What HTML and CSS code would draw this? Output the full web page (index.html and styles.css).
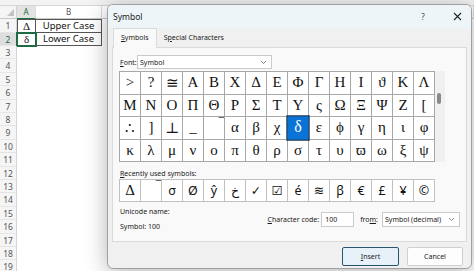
FILE: index.html
```html
<!DOCTYPE html>
<html lang="en">
<head>
  <meta charset="UTF-8" />
  <meta name="viewport" content="width=device-width, initial-scale=1.0" />
  <title>Symbol</title>
  <link rel="stylesheet" href="styles.css">
</head>
<body>
  <div class="sheet">
    <div class="formula-edge"></div>
    <div class="sheet-grid" id="sheetGrid">
      <div class="corner"><span class="corner-tri"></span></div>
      <div class="col-head active">A</div>
      <div class="col-head">B</div>
      <div class="col-head"></div>

      <div class="row-head">1</div>
      <div class="cell sym boxed top left">Δ</div>
      <div class="cell boxed top">Upper Case</div>
      <div class="cell"></div>

      <div class="row-head active">2</div>
      <div class="cell sym boxed left current">δ</div>
      <div class="cell boxed">Lower Case</div>
      <div class="cell"></div>
    </div>
  </div>

  <div class="dialog">
    <div class="titlebar">
      <span class="title">Symbol</span>
      <span class="help">?</span>
      <span class="close">
        <svg width="9" height="9" viewBox="0 0 9 9"><path d="M1 1 L8 8 M8 1 L1 8" stroke="#222" stroke-width="1.1" fill="none"/></svg>
      </span>
    </div>

    <div class="dialog-body">
      <div class="tabs">
        <div class="tab active"><u>S</u>ymbols</div>
        <div class="tab">S<u>p</u>ecial Characters</div>
      </div>

      <div class="panel">
        <div class="font-row">
          <span class="font-label"><u>F</u>ont:</span>
          <div class="select font-select">
            <span>Symbol</span>
            <svg width="7" height="5" viewBox="0 0 7 5"><path d="M1 1 L3.5 3.5 L6 1" stroke="#777" stroke-width="0.9" fill="none"/></svg>
          </div>
        </div>

        <div class="symbols-wrap">
          <div class="symbol-grid" id="symbolGrid"></div>
          <div class="scrollbar"><div class="thumb"></div></div>
        </div>

        <div class="recent-label"><u>R</u>ecently used symbols:</div>
        <div class="recent-grid" id="recentGrid"></div>

        <div class="info-row">
          <div class="unicode-info">
            <span>Unicode name:</span>
            <span>Symbol: 100</span>
          </div>
          <div class="code-row">
            <span><u>C</u>haracter code:</span>
            <div class="code-input">100</div>
            <span>fro<u>m</u>:</span>
            <div class="select from-select">
              <span>Symbol (decimal)</span>
              <svg width="7" height="5" viewBox="0 0 7 5"><path d="M1 1 L3.5 3.5 L6 1" stroke="#777" stroke-width="0.9" fill="none"/></svg>
            </div>
          </div>
        </div>
      </div>

      <div class="buttons">
        <button class="btn default"><span><u>I</u>nsert</span></button>
        <button class="btn">Cancel</button>
      </div>
    </div>
  </div>

  <script>
    const symbols = [
      ">", "?", "≅", "Α", "Β", "Χ", "Δ", "Ε", "Φ", "Γ", "Η", "Ι", "ϑ", "Κ", "Λ",
      "Μ", "Ν", "Ο", "Π", "Θ", "Ρ", "Σ", "Τ", "Υ", "ς", "Ω", "Ξ", "Ψ", "Ζ", "[",
      "∴", "]", "⊥", "_", "‾", "α", "β", "χ", "δ", "ε", "ϕ", "γ", "η", "ι", "φ",
      "κ", "λ", "μ", "ν", "ο", "π", "θ", "ρ", "σ", "τ", "υ", "ϖ", "ω", "ξ", "ψ"
    ];
    const recent = ["Δ", "‾", "σ", "Ø", "ŷ", "خ", "✓", "☑", "é", "≋", "β", "€", "£", "¥", "©"];

    const symbolGrid = document.getElementById("symbolGrid");
    symbols.forEach((ch, i) => {
      const cell = document.createElement("div");
      cell.className = "sym-cell";
      if (ch === "‾") cell.classList.add("top-right");
      if (i === 38) cell.classList.add("selected");
      cell.textContent = ch;
      symbolGrid.appendChild(cell);
    });

    const recentGrid = document.getElementById("recentGrid");
    recent.forEach((ch, i) => {
      const cell = document.createElement("div");
      cell.className = "recent-cell";
      if (i === 0) cell.classList.add("serif");
      if (ch === "‾") cell.classList.add("top-right");
      cell.textContent = ch;
      recentGrid.appendChild(cell);
    });

    const sheetGrid = document.getElementById("sheetGrid");
    for (let r = 3; r <= 19; r++) {
      const head = document.createElement("div");
      head.className = "row-head";
      head.textContent = r;
      sheetGrid.appendChild(head);
      for (let c = 0; c < 3; c++) {
        const cell = document.createElement("div");
        cell.className = "cell";
        sheetGrid.appendChild(cell);
      }
    }
  </script>
</body>
</html>
```

FILE: styles.css
```css
* {
  box-sizing: border-box;
  margin: 0;
  padding: 0;
}
body {
  width: 474px;
  height: 271px;
  overflow: hidden;
  position: relative;
  background: #ffffff;
  font-family: "Noto Sans", "Open Sans", "DejaVu Sans", sans-serif;
}

/* spreadsheet behind the dialog */
.sheet {
  height: 271px;
  overflow: hidden;
}
.formula-edge {
  height: 6px;
  background: #f3f3f3;
  border-bottom: 1px solid #d6d6d6;
}
.sheet-grid {
  display: grid;
  grid-template-columns: 17px 19px 66px 1fr;
  grid-template-rows: 13.3px;
  grid-auto-rows: 13.4px;
}
.corner {
  background: #f5f5f5;
  border-right: 1px solid #d4d4d4;
  border-bottom: 1px solid #c8c8c8;
  display: flex;
  justify-content: flex-end;
  align-items: flex-end;
  padding: 0 2px 2px 0;
}
.corner-tri {
  width: 0;
  height: 0;
  border-left: 7px solid transparent;
  border-bottom: 7px solid #c3c3c3;
}
.col-head {
  font-size: 8px;
  color: #555;
  text-align: center;
  line-height: 12px;
  background: #ffffff;
  border-right: 1px solid #dcdcdc;
  border-bottom: 1px solid #c8c8c8;
}
.col-head.active {
  background: #e3e3e3;
  color: #1b6a40;
  border-bottom: 1px solid #1e6e44;
}
.row-head {
  font-size: 8.5px;
  color: #555;
  text-align: center;
  line-height: 13px;
  background: #f5f5f5;
  border-right: 1px solid #d4d4d4;
  border-bottom: 1px solid #e6e6e6;
}
.row-head.active {
  background: #dedede;
  color: #1b6a40;
}
.cell {
  font-size: 9.5px;
  line-height: 12px;
  text-align: center;
  color: #111;
}
.cell.sym {
  font-family: "Liberation Serif", serif;
  font-size: 11px;
}
.cell.boxed {
  border-right: 1px solid #555;
  border-bottom: 1px solid #555;
}
.cell.top {
  border-top: 1px solid #555;
}
.cell.left {
  border-left: 1px solid #555;
}
.cell.current {
  outline: 2px solid #1d6b44;
  outline-offset: -1px;
}

/* Symbol dialog window */
.dialog {
  position: absolute;
  left: 107px;
  top: 4px;
  width: 365px;
  height: 265px;
  background: #f0f0f0;
  border: 1px solid #a0a0a0;
  border-radius: 6px;
  box-shadow: 0 3px 22px rgba(0, 0, 0, 0.3);
  display: flex;
  flex-direction: column;
  overflow: hidden;
  font-size: 7px;
  color: #1a1a1a;
}
.titlebar {
  height: 23px;
  background: #eef5f9;
  display: flex;
  align-items: center;
  padding-left: 5px;
  font-size: 8.5px;
  color: #222;
}
.title {
  flex: 1;
}
.help {
  width: 20px;
  text-align: center;
  font-size: 8px;
  color: #444;
  margin-right: 10px;
}
.close {
  width: 28px;
  display: flex;
  justify-content: center;
}
.dialog-body {
  flex: 1;
  padding: 0 4px;
  display: flex;
  flex-direction: column;
}
.tabs {
  display: flex;
  height: 19px;
  padding-left: 1px;
}
.tab {
  padding: 0 7px;
  line-height: 19px;
  font-size: 7px;
}
.tab.active {
  background: #f9f9f9;
  border: 1px solid #dadada;
  border-bottom: none;
  line-height: 18px;
  margin-bottom: -1px;
  position: relative;
  z-index: 1;
}
.panel {
  height: 195px;
  background: #f9f9f9;
  border: 1px solid #dadada;
  padding: 7px 6px 0 6px;
}
.font-row {
  display: flex;
  align-items: center;
  height: 14px;
}
.font-label {
  width: 18px;
  padding-left: 1px;
}
.select {
  height: 14px;
  background: #ffffff;
  border: 1px solid #cacaca;
  display: flex;
  align-items: center;
  justify-content: space-between;
  padding: 0 4px 0 2px;
}
.font-select {
  width: 135px;
}
.symbols-wrap {
  display: flex;
  margin-top: 2px;
}
.symbol-grid {
  display: grid;
  grid-template-columns: repeat(15, 20px);
  grid-template-rows: repeat(4, 21.6px);
  gap: 1px;
  background: #a8a8a8;
  border: 1px solid #a8a8a8;
}
.sym-cell {
  background: #ffffff;
  display: flex;
  justify-content: center;
  align-items: center;
  font-family: "Liberation Serif", "DejaVu Serif", serif;
  font-size: 15px;
  color: #111;
  overflow: hidden;
}
.sym-cell.top-right {
  justify-content: flex-end;
  align-items: flex-start;
  line-height: 15px;
}
.sym-cell.selected {
  background: #0a74d6;
  color: #ffffff;
  box-shadow: 0 0 0 1px #1c2d42;
  transform: scale(1.06);
  position: relative;
  z-index: 1;
}
.scrollbar {
  width: 10px;
  background: #f0f0f0;
  padding: 22px 0 0 2px;
}
.thumb {
  width: 4px;
  height: 11px;
  background: #8a8a8a;
  border-radius: 2px;
}
.recent-label {
  margin-top: 7px;
  line-height: 10px;
  padding-left: 1px;
}
.recent-grid {
  display: grid;
  grid-template-columns: repeat(15, 20px);
  grid-template-rows: 21px;
  gap: 1px;
  background: #c0c0c0;
  border: 1px solid #c0c0c0;
  width: 316px;
}
.recent-cell {
  background: #ffffff;
  display: flex;
  justify-content: center;
  align-items: center;
  font-family: "Noto Sans", "DejaVu Sans", sans-serif;
  font-size: 12.5px;
  color: #111;
  overflow: hidden;
}
.recent-cell.serif {
  font-family: "Liberation Serif", serif;
  font-size: 15px;
}
.recent-cell.top-right {
  justify-content: flex-end;
  align-items: flex-start;
  font-family: "Liberation Serif", serif;
  font-size: 15px;
  line-height: 15px;
}
.info-row {
  display: flex;
  align-items: center;
  margin-top: 5px;
}
.unicode-info {
  display: flex;
  flex-direction: column;
  gap: 5px;
  line-height: 10px;
  padding-left: 1px;
}
.code-row {
  margin-left: auto;
  display: flex;
  align-items: center;
}
.code-input {
  width: 33px;
  height: 15px;
  background: #ffffff;
  border: 1px solid #cacaca;
  padding: 2px 3px;
  line-height: 10px;
  margin: 0 6px 0 2px;
}
.from-select {
  width: 78px;
  height: 15px;
  margin-left: 4px;
}
.buttons {
  display: flex;
  justify-content: flex-end;
  gap: 8px;
  margin-top: 5px;
  padding-right: 4px;
}
.btn {
  width: 56px;
  height: 19px;
  background: #fdfdfd;
  border: 1px solid #cfcfcf;
  border-radius: 2px;
  font-family: inherit;
  font-size: 7px;
  color: #222;
}
.btn.default {
  width: 57px;
  background: #e6f1f9;
  border: 1.5px solid #28556e;
}
```
